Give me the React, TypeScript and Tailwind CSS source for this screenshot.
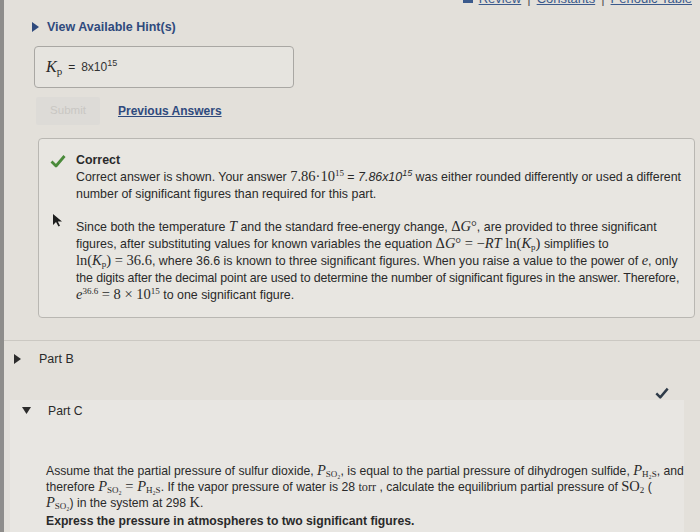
const sans = "font-['Liberation_Sans',Arial,sans-serif]";
const serif = "font-['Liberation_Serif','Times_New_Roman',serif]";

function Tri({ down = false }: { down?: boolean }) {
  return down ? (
    <svg width="9" height="7" viewBox="0 0 9 7">
      <path d="M0 0 L9 0 L4.5 7 Z" fill="#2c2c2c" />
    </svg>
  ) : (
    <svg width="7" height="10" viewBox="0 0 7 10">
      <path d="M0 0 L7 5 L0 10 Z" fill="#2c2c2c" />
    </svg>
  );
}

function Check({ color, size = 16 }: { color: string; size?: number }) {
  return (
    <svg width={size} height={size} viewBox="0 0 16 16">
      <path d="M1.5 8.5 L6 13 L14.5 3" fill="none" stroke={color} strokeWidth="2.8" strokeLinejoin="round" />
    </svg>
  );
}

function M({ children }: { children: React.ReactNode }) {
  return <span className={`${serif} text-[14.5px] leading-none`}>{children}</span>;
}

function Sup({ children }: { children: React.ReactNode }) {
  return <sup className="text-[9px] leading-[0]">{children}</sup>;
}

function Sub({ children }: { children: React.ReactNode }) {
  return <sub className="text-[9px] leading-[0]">{children}</sub>;
}

export default function App() {
  return (
    <div className={`w-[700px] h-[532px] overflow-hidden bg-[#e3e0da] flex text-[#2a2a2a] ${sans}`}>
      <div className="w-[4px] bg-[#8e8d8b] shrink-0" />
      <div className="w-[696px] min-w-0 flex flex-col">
        {/* top links, mostly scrolled out of view */}
        <div className="h-[6px] overflow-hidden flex justify-end pr-[8px]">
          <div className="flex items-end gap-[6px] -mt-[9px] text-[13px] leading-[15px] text-[#3b5a8c]">
            <span className="w-[10px] h-[8px] bg-[#3b5a8c] mb-[3px]" />
            <span className="underline">Review</span>
            <span className="text-[#555]">|</span>
            <span className="underline">Constants</span>
            <span className="text-[#555]">|</span>
            <span className="underline">Periodic Table</span>
          </div>
        </div>

        <div className="pl-[28px] pt-[12px] flex items-center gap-[8px]">
          <svg width="7" height="10" viewBox="0 0 7 10">
            <path d="M0 0 L7 5 L0 10 Z" fill="#2f4a7d" />
          </svg>
          <span className="text-[12.5px] font-bold text-[#2f4a7d]">View Available Hint(s)</span>
        </div>

        <div className="ml-[30px] mt-[9px] w-[260px] h-[42px] rounded-[4px] border border-[#a9a7a3] bg-[#e6e4df] flex items-center pl-[11px] gap-[6px]">
          <span className={`${serif} italic text-[16px]`}>
            K<sub className="not-italic text-[11px] leading-[0]">p</sub>
          </span>
          <span className="text-[12px]">=</span>
          <span className="text-[12px] text-[#333]">
            8x10<Sup>15</Sup>
          </span>
        </div>

        <div className="ml-[32px] mt-[9px] flex items-center gap-[18px]">
          <div className="w-[64px] h-[28px] rounded-[2px] bg-[#dddbd7] flex items-center justify-center text-[11.5px] text-[#c9c7c3]">
            Submit
          </div>
          <span className="text-[12px] font-bold text-[#2f4a7d] underline">Previous Answers</span>
        </div>

        <div className="ml-[34px] mt-[13px] w-[657px] h-[180px] overflow-hidden rounded-[4px] border border-[#b9b7b2] bg-[#e8e6e1] relative pl-[11px] pt-[13px] text-[12.4px] leading-[17px]">
          <div className="flex gap-[10px]">
            <div className="pt-[1px]">
              <Check color="#4a8a3a" />
            </div>
            <div>
              <div className="font-bold">Correct</div>
              <div className="whitespace-nowrap">
                Correct answer is shown. Your answer <M>7.86·10<Sup>15</Sup></M> ={' '}
                <i>
                  7.86x10<Sup>15</Sup>
                </i>{' '}
                was either rounded differently or used a different
              </div>
              <div>number of significant figures than required for this part.</div>
              <div className="mt-[16px] whitespace-nowrap">
                Since both the temperature <M><i>T</i></M> and the standard free-energy change, <M>Δ<i>G</i>°</M>, are provided
                to three significant
              </div>
              <div className="whitespace-nowrap">
                figures, after substituting values for known variables the equation{' '}
                <M>
                  Δ<i>G</i>° = −<i>RT</i> ln(<i>K</i>
                  <Sub>p</Sub>)
                </M>{' '}
                simplifies to
              </div>
              <div className="whitespace-nowrap">
                <M>
                  ln(<i>K</i>
                  <Sub>p</Sub>) = 36.6
                </M>
                , where 36.6 is known to three significant figures. When you raise a value to the power of <M><i>e</i></M>, only
              </div>
              <div className="whitespace-nowrap tracking-[-0.13px]">
                the digits after the decimal point are used to determine the number of significant figures in the answer. Therefore,
              </div>
              <div className="whitespace-nowrap">
                <M>
                  <i>e</i>
                  <Sup>36.6</Sup> = 8 × 10<Sup>15</Sup>
                </M>{' '}
                to one significant figure.
              </div>
            </div>
          </div>
          <svg className="absolute left-[13px] top-[74px]" width="11" height="14" viewBox="0 0 11 14">
            <path d="M1 1 L1 12 L4 9 L6.5 13.5 L8 12.8 L5.8 8.5 L10 8.5 Z" fill="#1e1e1e" />
          </svg>
        </div>

        <div className="mt-[22px] h-px bg-[#cbc8c2]" />

        <div className="pl-[10px] pt-[9px] flex items-center gap-[18px] text-[12.5px]">
          <Tri />
          <span>Part B</span>
        </div>

        <div className="flex justify-end pr-[31px] pt-[17px] h-[31px]">
          <Check color="#2f3b48" size={14} />
        </div>

        <div className="ml-[6px] mr-[16px] flex-1 bg-[#e8e6e2] pl-[12px] pt-[3px] text-[12.2px] leading-[16px]">
          <div className="flex items-center gap-[17px]">
            <Tri down />
            <span>Part C</span>
          </div>
          <div className="pl-[24px] pt-[44px]">
            <div className="whitespace-nowrap">
              Assume that the partial pressure of sulfur dioxide,{' '}
              <M>
                <i>P</i>
                <Sub>SO₂</Sub>
              </M>
              , is equal to the partial pressure of dihydrogen sulfide,{' '}
              <M>
                <i>P</i>
                <Sub>H₂S</Sub>
              </M>
              , and
            </div>
            <div className="whitespace-nowrap">
              therefore{' '}
              <M>
                <i>P</i>
                <Sub>SO₂</Sub> = <i>P</i>
                <Sub>H₂S</Sub>
              </M>
              . If the vapor pressure of water is 28 <span className={serif}>torr</span> , calculate the equilibrium
              partial pressure of{' '}
              <M>
                SO<Sub>2</Sub>
              </M>{' '}
              (
            </div>
            <div className="whitespace-nowrap">
              <M>
                <i>P</i>
                <Sub>SO₂</Sub>
              </M>
              ) in the system at 298 <M>K</M>.
            </div>
            <div className="mt-[2px] font-bold">Express the pressure in atmospheres to two significant figures.</div>
          </div>
        </div>
      </div>
    </div>
  );
}
